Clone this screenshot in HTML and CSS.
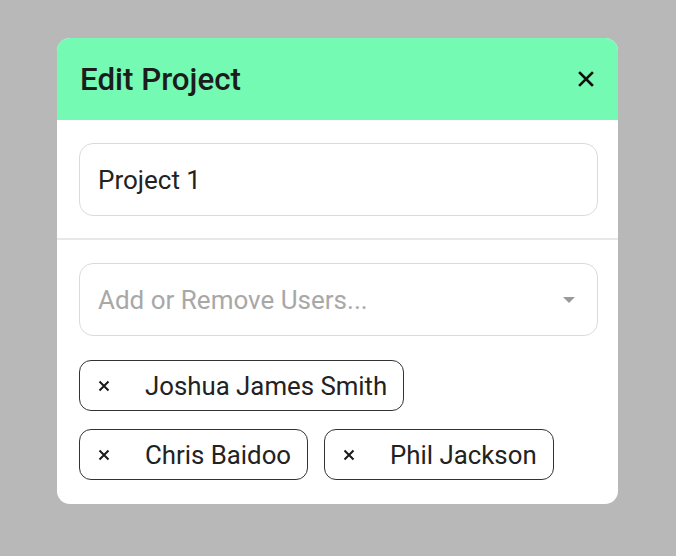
FILE: index.html
```html
<!DOCTYPE html>
<html>
<head>
<meta charset="utf-8">
<link rel="stylesheet" href="styles.css">
</head>
<body>
<div class="modal">
  <div class="modal-header">
    <h1 class="modal-title">Edit Project</h1>
    <button class="close-btn" aria-label="Close">
      <svg width="16" height="16" viewBox="0 0 16 16"><path d="M2 2L14 14M14 2L2 14" stroke="#111" stroke-width="2.6" stroke-linecap="square"/></svg>
    </button>
  </div>
  <div class="section section-name">
    <div class="field"><span class="field-text">Project 1</span></div>
  </div>
  <div class="section section-users">
    <div class="field select">
      <span class="placeholder">Add or Remove Users...</span>
      <svg class="caret" width="12" height="6" viewBox="0 0 12 6"><path d="M0 0H12L6 6Z" fill="#9a9a9a"/></svg>
    </div>
    <div class="chips">
      <div class="chip"><svg class="chip-x" width="12" height="12" viewBox="0 0 12 12"><path d="M1.5 1.5L10.5 10.5M10.5 1.5L1.5 10.5" stroke="#1a1a1a" stroke-width="2"/></svg><span class="chip-label">Joshua James Smith</span></div>
      <div class="chip"><svg class="chip-x" width="12" height="12" viewBox="0 0 12 12"><path d="M1.5 1.5L10.5 10.5M10.5 1.5L1.5 10.5" stroke="#1a1a1a" stroke-width="2"/></svg><span class="chip-label">Chris Baidoo</span></div>
      <div class="chip"><svg class="chip-x" width="12" height="12" viewBox="0 0 12 12"><path d="M1.5 1.5L10.5 10.5M10.5 1.5L1.5 10.5" stroke="#1a1a1a" stroke-width="2"/></svg><span class="chip-label">Phil Jackson</span></div>
    </div>
  </div>
</div>
</body>
</html>
```

FILE: styles.css
```css
html, body {
  margin: 0;
  padding: 0;
  background: #b8b8b8;
  font-family: Roboto, "Noto Sans", sans-serif;
}
body {
  padding: 38px 0 0 57px;
}
.modal {
  width: 561px;
  background: #ffffff;
  border-radius: 13px;
  overflow: hidden;
}
.modal-header {
  height: 82px;
  background: #75fab3;
  display: flex;
  align-items: center;
  justify-content: space-between;
  padding: 0 24px 0 23px;
}
.modal-title {
  margin: 0;
  font-size: 31.3px;
  font-weight: 500;
  color: #1c1c1c;
  letter-spacing: 0;
}
.close-btn {
  border: 0;
  background: none;
  padding: 0;
  display: flex;
  width: 16px;
  height: 16px;
}
.section {
  padding: 23px 20px 22px 22px;
}
.section-name {
  border-bottom: 2px solid #e8e8e8;
}
.section-users {
  padding-bottom: 24px;
}
.field {
  height: 73px;
  box-sizing: border-box;
  border: 1.5px solid #dadada;
  border-radius: 14px;
  display: flex;
  align-items: center;
  padding: 0 22px 0 18px;
  font-size: 26px;
}
.field-text {
  color: #222;
}
.select {
  justify-content: space-between;
}
.placeholder {
  color: #a8a8a8;
}
.chips {
  margin-top: 24px;
  display: flex;
  flex-wrap: wrap;
  gap: 18px 16px;
}
.chip {
  height: 51px;
  box-sizing: border-box;
  border: 1.5px solid #333;
  border-radius: 12px;
  display: flex;
  align-items: center;
  padding: 0 16px 0 18px;
  font-size: 25.8px;
  color: #222;
  white-space: nowrap;
}
.chip-x {
  flex: none;
  margin-right: 35px;
}
```
